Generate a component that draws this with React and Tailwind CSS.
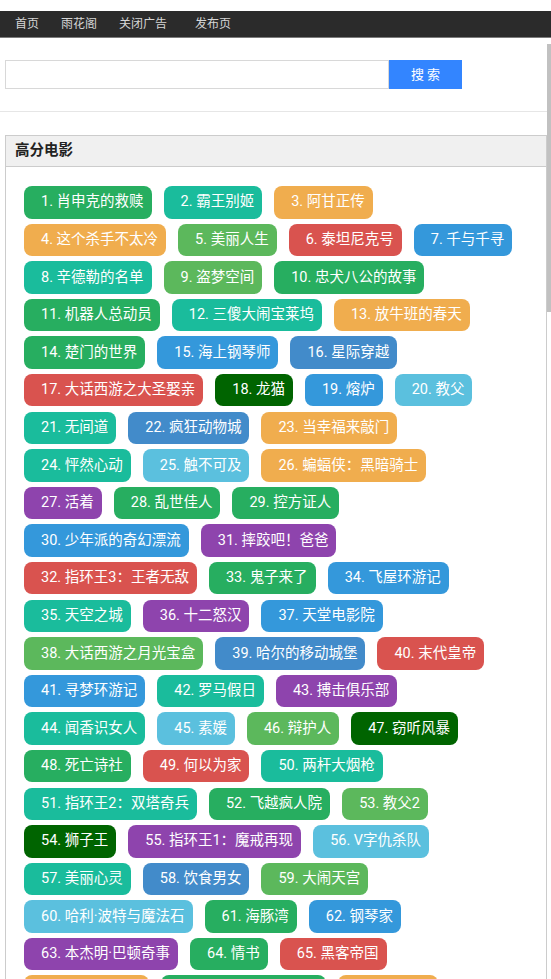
const tone = {
  green: 'bg-[#27ae60]',
  teal: 'bg-[#1abc9c]',
  orange: 'bg-[#f0ad4e]',
  lime: 'bg-[#5cb85c]',
  red: 'bg-[#d9534f]',
  blue: 'bg-[#3498db]',
  steel: 'bg-[#428bca]',
  dark: 'bg-[#006400]',
  sky: 'bg-[#5bc0de]',
  purple: 'bg-[#8e44ad]',
};

// one entry per visual row, so wrapping matches the screenshot
const rows = [
  [['肖申克的救赎', 'green'], ['霸王别姬', 'teal'], ['阿甘正传', 'orange']],
  [['这个杀手不太冷', 'orange'], ['美丽人生', 'lime'], ['泰坦尼克号', 'red'], ['千与千寻', 'blue']],
  [['辛德勒的名单', 'teal'], ['盗梦空间', 'lime'], ['忠犬八公的故事', 'green']],
  [['机器人总动员', 'green'], ['三傻大闹宝莱坞', 'teal'], ['放牛班的春天', 'orange']],
  [['楚门的世界', 'green'], ['海上钢琴师', 'blue'], ['星际穿越', 'steel']],
  [['大话西游之大圣娶亲', 'red'], ['龙猫', 'dark'], ['熔炉', 'blue'], ['教父', 'sky']],
  [['无间道', 'teal'], ['疯狂动物城', 'steel'], ['当幸福来敲门', 'orange']],
  [['怦然心动', 'teal'], ['触不可及', 'sky'], ['蝙蝠侠：黑暗骑士', 'orange']],
  [['活着', 'purple'], ['乱世佳人', 'green'], ['控方证人', 'green']],
  [['少年派的奇幻漂流', 'blue'], ['摔跤吧！爸爸', 'purple']],
  [['指环王3：王者无敌', 'red'], ['鬼子来了', 'green'], ['飞屋环游记', 'blue']],
  [['天空之城', 'teal'], ['十二怒汉', 'purple'], ['天堂电影院', 'blue']],
  [['大话西游之月光宝盒', 'lime'], ['哈尔的移动城堡', 'steel'], ['末代皇帝', 'red']],
  [['寻梦环游记', 'blue'], ['罗马假日', 'teal'], ['搏击俱乐部', 'purple']],
  [['闻香识女人', 'teal'], ['素媛', 'sky'], ['辩护人', 'lime'], ['窃听风暴', 'dark']],
  [['死亡诗社', 'green'], ['何以为家', 'red'], ['两杆大烟枪', 'teal']],
  [['指环王2：双塔奇兵', 'teal'], ['飞越疯人院', 'green'], ['教父2', 'lime']],
  [['狮子王', 'dark'], ['指环王1：魔戒再现', 'purple'], ['V字仇杀队', 'sky']],
  [['美丽心灵', 'teal'], ['饮食男女', 'steel'], ['大闹天宫', 'lime']],
  [['哈利·波特与魔法石', 'sky'], ['海豚湾', 'green'], ['钢琴家', 'blue']],
  [['本杰明·巴顿奇事', 'purple'], ['情书', 'green'], ['黑客帝国', 'red']],
  [['天使爱美丽·', 'orange'], ['被嫌弃的松子一生', 'green'], ['狮子王2', 'orange']],
];

function Tag({ n, title, color }) {
  return (
    <span className={`${tone[color]} h-[32.5px] flex items-center rounded-lg pl-[17px] pr-[8px] text-white text-[14.5px] whitespace-nowrap`}>
      {n}. {title}
    </span>
  );
}

export default function App() {
  let n = 0;
  return (
    <div className="bg-white min-h-[979px] overflow-hidden pt-[11px] font-[Roboto,'Noto_Sans_CJK_SC',sans-serif]">
      <nav className="h-[27px] bg-[#2b2b2b] border-b border-[#7b7b7b] flex items-center gap-[22px] pl-[15px] text-[12px] text-[#d6d6d6]">
        <span>首页</span>
        <span>雨花阁</span>
        <span>关闭广告</span>
        <span className="ml-[6px]">发布页</span>
      </nav>

      <div className="flex">
        <div className="w-[547px]">
          <div className="flex pt-[22px] pl-[5px]">
            <input className="w-[384px] h-[29px] border border-[#d8d8d8] outline-none px-2" />
            <button className="w-[73px] h-[29px] bg-[#3385ff] text-white text-[13px]">搜 索</button>
          </div>

          <div className="mt-[22px] border-t border-[#e6e6e6]" />

          <div className="mt-[23px] ml-[5px] border border-[#cccccc]">
            <div className="h-[31px] bg-[#f0f0f0] border-b border-[#cccccc] flex items-center pl-[9px] text-[14.5px] font-bold text-[#222]">
              高分电影
            </div>
            <div className="pt-[19px] pl-[18px] flex flex-col gap-[5.1px]">
              {rows.map((row, i) => (
                <div key={i} className="flex gap-3">
                  {row.map(([title, color]) => {
                    n += 1;
                    return <Tag key={n} n={n} title={title} color={color} />;
                  })}
                </div>
              ))}
            </div>
          </div>
        </div>

        <div className="w-[4px] pt-[6px]">
          <div className="h-[268px] bg-[#c1c1c1]" />
        </div>
      </div>
    </div>
  );
}
